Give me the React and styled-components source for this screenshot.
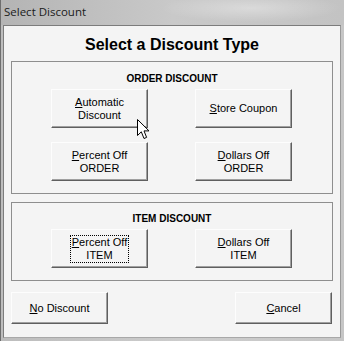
import React from 'react'
import styled, { createGlobalStyle } from 'styled-components'

const GlobalStyle = createGlobalStyle`
  html, body {
    margin: 0;
    padding: 0;
    background: #c8c8c8;
  }
  * { box-sizing: border-box; }
`

export default function App () {
  return (
    <>
      <GlobalStyle />
      <Window>
        <TitleBar>Select Discount</TitleBar>
        <Client>
          <Heading>Select a Discount Type</Heading>

          <Group>
            <GroupTitle>ORDER DISCOUNT</GroupTitle>
            <ButtonGrid>
              <DlgButton>
                <span><u>A</u>utomatic<br />Discount</span>
                <Cursor viewBox='0 0 13 21' width='13' height='21'>
                  <path
                    d='M0.5 0.5 L0.5 16.5 L4.3 12.8 L7 19.5 L9.6 18.4 L7 11.9 L12 11.9 Z'
                    fill='#fff'
                    stroke='#000'
                    strokeWidth='1'
                    strokeLinejoin='miter'
                  />
                </Cursor>
              </DlgButton>
              <DlgButton><span><u>S</u>tore Coupon</span></DlgButton>
              <DlgButton><span><u>P</u>ercent Off<br />ORDER</span></DlgButton>
              <DlgButton><span><u>D</u>ollars Off<br />ORDER</span></DlgButton>
            </ButtonGrid>
          </Group>

          <Group $gap>
            <GroupTitle $top={9}>ITEM DISCOUNT</GroupTitle>
            <ButtonGrid>
              <DlgButton>
                <Focus><u>P</u>ercent Off<br />ITEM</Focus>
              </DlgButton>
              <DlgButton><span><u>D</u>ollars Off<br />ITEM</span></DlgButton>
            </ButtonGrid>
          </Group>

          <Footer>
            <DlgButton $short><span><u>N</u>o Discount</span></DlgButton>
            <DlgButton $short><span><u>C</u>ancel</span></DlgButton>
          </Footer>
        </Client>
      </Window>
    </>
  )
}

const Window = styled.div`
  width: 344px;
  height: 341px;
  display: flex;
  flex-direction: column;
  border-left: 1px solid #6e6e6e;
  background: linear-gradient(to right, #bdbdbd, #cdcdcd 55%, #c6c6c6);
`

const TitleBar = styled.div`
  height: 25px;
  padding: 0 0 2px 3px;
  display: flex;
  align-items: center;
  font-family: 'Open Sans', 'Liberation Sans', sans-serif;
  font-size: 11.5px;
  color: #1a1a1a;
  background:
    radial-gradient(ellipse 90px 14px at 250px 8px, rgba(255,255,255,0.35), transparent),
    linear-gradient(to right, #b4b4b4, #c9c9c9 50%, #c3c3c3);
`

const Client = styled.div`
  flex: 1;
  margin: 0 3px 3px 2px;
  background: #f4f4f4;
  border: 1px solid #7c7c7c;
  border-right-color: #9a9a9a;
  border-bottom-color: #a8a8a8;
  padding: 0 7px;
  display: flex;
  flex-direction: column;
  font-family: 'Liberation Sans', Arial, sans-serif;
`

const Heading = styled.div`
  height: 35px;
  padding-top: 3px;
  line-height: 31px;
  text-align: center;
  font-size: 16px;
  font-weight: bold;
  color: #000;
`

const Group = styled.div`
  border: 1px solid #8e8e8e;
  padding: 0 0 12px;
  margin-top: ${({ $gap }) => ($gap ? '8px' : '0')};
  display: flex;
  flex-direction: column;
  align-items: center;
`

const GroupTitle = styled.div`
  margin-top: ${({ $top }) => ($top ?? 10)}px;
  margin-bottom: 3px;
  height: 14px;
  line-height: 14px;
  font-size: 10px;
  font-weight: bold;
  color: #000;
`

const ButtonGrid = styled.div`
  display: grid;
  grid-template-columns: 97px 97px;
  column-gap: 47px;
  row-gap: 14px;
  margin-right: 1px;
`

const DlgButton = styled.div`
  position: relative;
  height: ${({ $short }) => ($short ? '32px' : '39px')};
  width: 97px;
  background: #f4f4f4;
  border: 1px solid;
  border-color: #fdfdfd #5f5f5f #5f5f5f #fdfdfd;
  box-shadow: inset -1px -1px 0 #a0a0a0;
  display: flex;
  align-items: center;
  justify-content: center;
  text-align: center;
  font-size: 11px;
  line-height: 13px;
  color: #000;
  u { text-decoration: underline; text-underline-offset: 1px; }
`

const Focus = styled.span`
  display: inline-block;
  border: 1px dotted #000;
  padding: 0 1px;
  margin-top: 1px;
`

const Cursor = styled.svg`
  position: absolute;
  left: 85px;
  top: 29px;
  overflow: visible;
`

const Footer = styled.div`
  margin-top: 11px;
  display: flex;
  justify-content: space-between;
  padding-right: 1px;
`
